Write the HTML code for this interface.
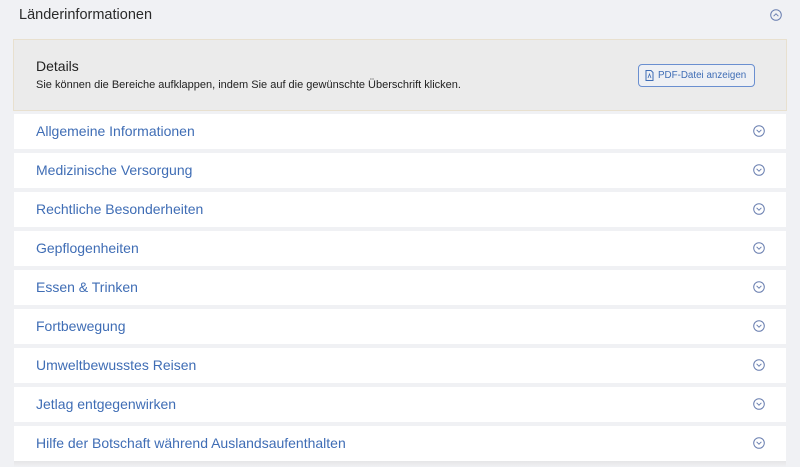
<!DOCTYPE html>
<html><head><meta charset="utf-8"><style>
*{margin:0;padding:0;box-sizing:border-box}
body{width:800px;height:467px;overflow:hidden;background:#f0f1f4;font-family:"Liberation Sans",sans-serif;position:relative}
.title{position:absolute;left:19px;top:7px;font-size:14.5px;color:#2a2a2a}
.ic{position:absolute;width:12px;height:12px}
.details{position:absolute;left:13px;top:39px;width:774px;height:72px;background:#ebebeb;border:1px solid #e8e0cf}
.details h3{position:absolute;left:22px;top:18px;font-weight:normal;font-size:14px;color:#222}
.details p{position:absolute;left:22px;top:39px;font-size:11px;color:#222}
.btn{position:absolute;left:624px;top:24px;width:117px;height:23px;border:1px solid #6a8fd0;border-radius:4px;font-size:9.8px;color:#3f6db5;padding:5px 0 0 19px;background:#eef0f4;white-space:nowrap}
.row{position:absolute;left:14px;width:772px;height:35px;background:#fff}
.row span{position:absolute;left:22px;top:9px;font-size:14px;color:#3f6db5}
.row svg{position:absolute;left:739px;top:11px}
.shadow{position:absolute;left:14px;top:458px;width:772px;height:9px;background:linear-gradient(#e0e0e0,#f0f1f4)}
</style></head><body>
<div class="title">Länderinformationen</div>
<svg class="ic" style="left:770px;top:9px" viewBox="0 0 12 12"><circle cx="6" cy="6" r="5.3" fill="none" stroke="#6a7fb0" stroke-width="1"/><path d="M3.6 7.2 6 4.8 8.4 7.2" fill="none" stroke="#6a7fb0" stroke-width="1"/></svg>
<div class="details"><h3>Details</h3><p>Sie können die Bereiche aufklappen, indem Sie auf die gewünschte Überschrift klicken.</p>
<div class="btn"><svg style="position:absolute;left:6px;top:5px" width="9" height="11" viewBox="0 0 9 11"><path d="M1 .5h5l2 2v8H1z" fill="none" stroke="#3f6db5"/><path d="M3 8l1.5-4 1.5 4" fill="none" stroke="#3f6db5" stroke-width=".8"/></svg>PDF-Datei anzeigen</div></div>
<div class="shadow"></div>
<div class="row" style="top:114px"><span>Allgemeine Informationen</span><svg width="12" height="12" viewBox="0 0 12 12"><circle cx="6" cy="6" r="5.3" fill="none" stroke="#6a7fb0"/><path d="M3.6 4.8 6 7.2 8.4 4.8" fill="none" stroke="#6a7fb0"/></svg></div>
<div class="row" style="top:153px"><span>Medizinische Versorgung</span><svg width="12" height="12" viewBox="0 0 12 12"><circle cx="6" cy="6" r="5.3" fill="none" stroke="#6a7fb0"/><path d="M3.6 4.8 6 7.2 8.4 4.8" fill="none" stroke="#6a7fb0"/></svg></div>
<div class="row" style="top:192px"><span>Rechtliche Besonderheiten</span><svg width="12" height="12" viewBox="0 0 12 12"><circle cx="6" cy="6" r="5.3" fill="none" stroke="#6a7fb0"/><path d="M3.6 4.8 6 7.2 8.4 4.8" fill="none" stroke="#6a7fb0"/></svg></div>
<div class="row" style="top:231px"><span>Gepflogenheiten</span><svg width="12" height="12" viewBox="0 0 12 12"><circle cx="6" cy="6" r="5.3" fill="none" stroke="#6a7fb0"/><path d="M3.6 4.8 6 7.2 8.4 4.8" fill="none" stroke="#6a7fb0"/></svg></div>
<div class="row" style="top:270px"><span>Essen &amp; Trinken</span><svg width="12" height="12" viewBox="0 0 12 12"><circle cx="6" cy="6" r="5.3" fill="none" stroke="#6a7fb0"/><path d="M3.6 4.8 6 7.2 8.4 4.8" fill="none" stroke="#6a7fb0"/></svg></div>
<div class="row" style="top:309px"><span>Fortbewegung</span><svg width="12" height="12" viewBox="0 0 12 12"><circle cx="6" cy="6" r="5.3" fill="none" stroke="#6a7fb0"/><path d="M3.6 4.8 6 7.2 8.4 4.8" fill="none" stroke="#6a7fb0"/></svg></div>
<div class="row" style="top:348px"><span>Umweltbewusstes Reisen</span><svg width="12" height="12" viewBox="0 0 12 12"><circle cx="6" cy="6" r="5.3" fill="none" stroke="#6a7fb0"/><path d="M3.6 4.8 6 7.2 8.4 4.8" fill="none" stroke="#6a7fb0"/></svg></div>
<div class="row" style="top:387px"><span>Jetlag entgegenwirken</span><svg width="12" height="12" viewBox="0 0 12 12"><circle cx="6" cy="6" r="5.3" fill="none" stroke="#6a7fb0"/><path d="M3.6 4.8 6 7.2 8.4 4.8" fill="none" stroke="#6a7fb0"/></svg></div>
<div class="row" style="top:426px"><span>Hilfe der Botschaft während Auslandsaufenthalten</span><svg width="12" height="12" viewBox="0 0 12 12"><circle cx="6" cy="6" r="5.3" fill="none" stroke="#6a7fb0"/><path d="M3.6 4.8 6 7.2 8.4 4.8" fill="none" stroke="#6a7fb0"/></svg></div>
</body></html>
